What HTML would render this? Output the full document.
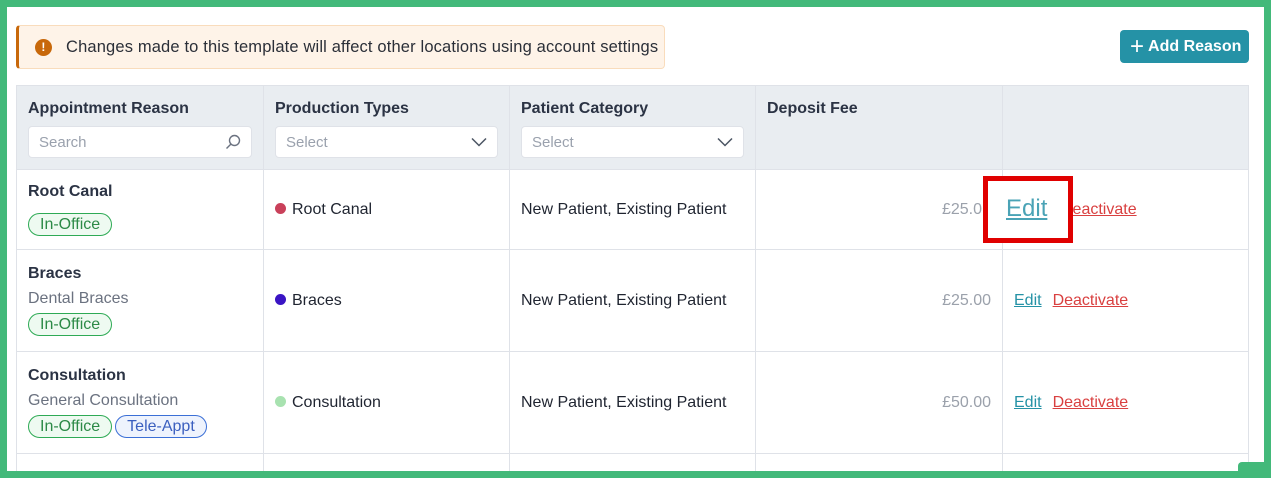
<!DOCTYPE html>
<html><head><meta charset="utf-8"><style>
*{box-sizing:border-box;margin:0;padding:0}
body{width:1271px;height:478px;background:#43b97a;font-family:"Liberation Sans",sans-serif;position:relative;overflow:hidden}
.inner{position:absolute;left:7px;top:7px;width:1257px;height:464px;background:#fff;overflow:hidden}
.alert{position:absolute;left:9px;top:18px;width:649px;height:44px;background:#fef3e8;border:1px solid #f9dcbc;border-left:3px solid #c8680a;border-radius:4px;font-size:16.5px;letter-spacing:0.15px;color:#2b2f38;display:flex;align-items:center;padding-left:16px}
.alert .ic{width:17px;height:17px;border-radius:50%;background:#c8680a;color:#fff;font-weight:bold;font-size:12px;display:flex;align-items:center;justify-content:center;margin-right:14px}
.btn{position:absolute;left:1113px;top:23px;width:129px;height:33px;background:#2592a6;border-radius:4px;color:#fff;font-size:16px;font-weight:bold;display:flex;align-items:center;padding-left:10px}
.btn span{font-size:24px;font-weight:normal;margin-right:4px;line-height:1}
table{position:absolute;left:9px;top:78px;border-collapse:collapse;font-size:16px;color:#1f2430}
td,th{border:1px solid #dfe2e8;vertical-align:middle;text-align:left}
th{background:#e9edf1;height:84px;vertical-align:top;padding:14px 11px 0;font-weight:bold;color:#2b3344;font-size:16px}
.inp{margin-top:8px;height:32px;background:#fff;border:1px solid #dfe2e8;border-radius:4px;font-weight:normal;color:#9aa1ad;font-size:15px;display:flex;align-items:center;justify-content:space-between;padding:0 10px}
td{padding:0 11px}
.t{font-weight:bold;color:#2b3344}
.s{color:#6b7280;margin-top:7px}
.tag{display:inline-block;border:1px solid #2eaa55;color:#2c8a47;background:#eefaf1;border-radius:12px;padding:0 11px;height:23px;line-height:21px;font-size:16px;margin-top:5px}
.tag.b{border-color:#3b6fd6;color:#3b5fbf;background:#eef3fd;margin-left:3px}
.dot{display:inline-block;width:11px;height:11px;border-radius:50%;margin-right:6px;vertical-align:0px}
.fee{text-align:right;color:#9ba1ab}
a{text-decoration:underline;font-size:16px}
.e{color:#2592a6;margin-right:11px}.d{color:#d94040}
</style></head><body>
<div class="inner">
<div class="alert"><div class="ic">!</div>Changes made to this template will affect other locations using account settings</div>
<div class="btn"><span>+</span>Add Reason</div>
<table>
<tr><th style="width:247px">Appointment Reason<div class="inp">Search<svg width="16" height="16" viewBox="0 0 16 16"><circle cx="9.5" cy="6.5" r="5" fill="none" stroke="#6b7280" stroke-width="1.4"/><path d="M6 10L1.5 14.5" stroke="#6b7280" stroke-width="1.4"/></svg></div></th>
<th style="width:246px">Production Types<div class="inp">Select<svg width="16" height="10" viewBox="0 0 16 10"><path d="M1 1.5L8 8.5L15 1.5" fill="none" stroke="#4b5563" stroke-width="1.5"/></svg></div></th>
<th style="width:246px">Patient Category<div class="inp">Select<svg width="16" height="10" viewBox="0 0 16 10"><path d="M1 1.5L8 8.5L15 1.5" fill="none" stroke="#4b5563" stroke-width="1.5"/></svg></div></th>
<th style="width:247px">Deposit Fee</th><th style="width:246px"></th></tr>
<tr style="height:80px"><td><div class="t">Root Canal</div><div class="tag" style="margin-top:12px">In-Office</div></td><td><span class="dot" style="background:#c9405a"></span>Root Canal</td><td>New Patient, Existing Patient</td><td class="fee" style="padding-right:20px">£25.0</td><td style="position:relative;padding:0"><a class="d" style="position:absolute;left:58px;top:31px">Deactivate</a><div style="position:absolute;left:-20px;top:6px;width:90px;height:67px;border:5px solid #e00000;background:#fff"></div><a style="position:absolute;left:3px;top:25px;font-size:24px;color:#4aa3b6">Edit</a></td></tr>
<tr style="height:102px"><td><div class="t">Braces</div><div class="s">Dental Braces</div><div class="tag">In-Office</div></td><td><span class="dot" style="background:#3a14c4"></span>Braces</td><td>New Patient, Existing Patient</td><td class="fee">£25.00</td><td><a class="e">Edit</a><a class="d">Deactivate</a></td></tr>
<tr style="height:102px"><td><div class="t">Consultation</div><div class="s">General Consultation</div><div class="tag">In-Office</div><div class="tag b">Tele-Appt</div></td><td><span class="dot" style="background:#a8e2b0"></span>Consultation</td><td>New Patient, Existing Patient</td><td class="fee">£50.00</td><td><a class="e">Edit</a><a class="d">Deactivate</a></td></tr>
<tr style="height:30px"><td></td><td></td><td></td><td></td><td></td></tr>
</table>
</div>
<div style="position:absolute;left:1238px;top:462px;width:33px;height:16px;background:#43b97a;border-radius:4px 0 0 0"></div>
</body></html>
